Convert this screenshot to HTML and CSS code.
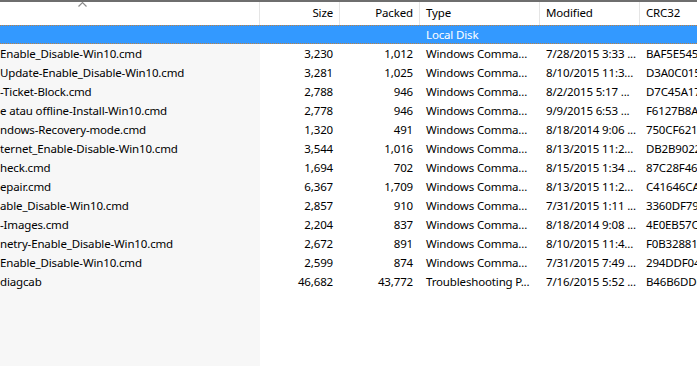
FILE: index.html
```html
<!DOCTYPE html>
<html>
<head>
<meta charset="utf-8">
<link rel="stylesheet" href="styles.css">
</head>
<body>
<div class="list">
  <div class="header">
    <div class="hcell name"><span class="sort"><svg width="9" height="6" viewBox="0 0 9 6"><path d="M0.5 5.5 L4.5 1.5 L8.5 5.5" fill="none" stroke="#8a8a8a" stroke-width="1.2"/></svg></span></div>
    <div class="hcell num">Size</div>
    <div class="hcell num">Packed</div>
    <div class="hcell">Type</div>
    <div class="hcell">Modified</div>
    <div class="hcell last">CRC32</div>
  </div>
  <div class="group">
    <div></div><div></div><div></div>
    <div class="gtext">Local Disk</div>
  </div>
  <div class="rows">
    <div class="row"><div class="c name">Enable_Disable-Win10.cmd</div><div class="c num">3,230</div><div class="c num">1,012</div><div class="c">Windows Comma...</div><div class="c">7/28/2015 3:33 ...</div><div class="c last">BAF5E545</div></div>
    <div class="row"><div class="c name">Update-Enable_Disable-Win10.cmd</div><div class="c num">3,281</div><div class="c num">1,025</div><div class="c">Windows Comma...</div><div class="c">8/10/2015 11:3...</div><div class="c last">D3A0C015</div></div>
    <div class="row"><div class="c name">-Ticket-Block.cmd</div><div class="c num">2,788</div><div class="c num">946</div><div class="c">Windows Comma...</div><div class="c">8/2/2015 5:17 ...</div><div class="c last">D7C45A17</div></div>
    <div class="row"><div class="c name">e atau offline-Install-Win10.cmd</div><div class="c num">2,778</div><div class="c num">946</div><div class="c">Windows Comma...</div><div class="c">9/9/2015 6:53 ...</div><div class="c last">F6127B8A</div></div>
    <div class="row"><div class="c name">ndows-Recovery-mode.cmd</div><div class="c num">1,320</div><div class="c num">491</div><div class="c">Windows Comma...</div><div class="c">8/18/2014 9:06 ...</div><div class="c last">750CF621</div></div>
    <div class="row"><div class="c name">ternet_Enable-Disable-Win10.cmd</div><div class="c num">3,544</div><div class="c num">1,016</div><div class="c">Windows Comma...</div><div class="c">8/13/2015 11:2...</div><div class="c last">DB2B9022</div></div>
    <div class="row"><div class="c name">heck.cmd</div><div class="c num">1,694</div><div class="c num">702</div><div class="c">Windows Comma...</div><div class="c">8/15/2015 1:34 ...</div><div class="c last">87C28F46</div></div>
    <div class="row"><div class="c name">epair.cmd</div><div class="c num">6,367</div><div class="c num">1,709</div><div class="c">Windows Comma...</div><div class="c">8/13/2015 11:2...</div><div class="c last">C41646CA</div></div>
    <div class="row"><div class="c name">able_Disable-Win10.cmd</div><div class="c num">2,857</div><div class="c num">910</div><div class="c">Windows Comma...</div><div class="c">7/31/2015 1:11 ...</div><div class="c last">3360DF79</div></div>
    <div class="row"><div class="c name">-Images.cmd</div><div class="c num">2,204</div><div class="c num">837</div><div class="c">Windows Comma...</div><div class="c">8/18/2014 9:08 ...</div><div class="c last">4E0EB57C</div></div>
    <div class="row"><div class="c name">netry-Enable_Disable-Win10.cmd</div><div class="c num">2,672</div><div class="c num">891</div><div class="c">Windows Comma...</div><div class="c">8/10/2015 11:4...</div><div class="c last">F0B32881</div></div>
    <div class="row"><div class="c name">Enable_Disable-Win10.cmd</div><div class="c num">2,599</div><div class="c num">874</div><div class="c">Windows Comma...</div><div class="c">7/31/2015 7:49 ...</div><div class="c last">294DDF04</div></div>
    <div class="row"><div class="c name">diagcab</div><div class="c num">46,682</div><div class="c num">43,772</div><div class="c">Troubleshooting P...</div><div class="c">7/16/2015 5:52 ...</div><div class="c last">B46B6DDF</div></div>
  </div>
</div>
</body>
</html>
```
FILE: styles.css
```css
html, body {
  margin: 0;
  padding: 0;
  background: #ffffff;
}
body {
  width: 697px;
  height: 366px;
  overflow: hidden;
  font-family: "Noto Sans", "Open Sans", sans-serif;
  font-size: 11.5px;
  letter-spacing: -0.15px;
  color: #000;
}
.list {
  display: flex;
  flex-direction: column;
  height: 366px;
  width: 697px;
  overflow: hidden;
}
.header {
  display: grid;
  grid-template-columns: 260px 80px 80px 120px 100px 120px;
  height: 23px;
  border-top: 2px solid #6e6e6e;
  background: #fff;
}
.hcell {
  border-right: 1px solid #e5e5e5;
  padding: 0 6px;
  line-height: 22px;
  white-space: nowrap;
  position: relative;
}
.hcell.last { border-right: none; }
.num { text-align: right; }
.hcell.num { padding-right: 6px; }
.sort {
  position: absolute;
  left: 78px;
  top: -1px;
  line-height: 0;
}
.group {
  display: grid;
  grid-template-columns: 260px 80px 80px 1fr;
  height: 17px;
  background: #3399ff;
  border-top: 1px dotted #c08040;
  border-bottom: 1px dotted #c08040;
  color: #fff;
}
.gtext {
  padding-left: 6px;
  line-height: 17px;
}
.rows {
  flex: 1;
  background: linear-gradient(to right, #f7f7f7 260px, #ffffff 260px);
}
.row {
  display: grid;
  grid-template-columns: 260px 80px 80px 120px 100px 120px;
  height: 19px;
  line-height: 19px;
  white-space: nowrap;
}
.c {
  overflow: hidden;
  padding: 0 6px;
}
.c.name { padding-left: 0; }
.c.num { padding-right: 7px; }
```
